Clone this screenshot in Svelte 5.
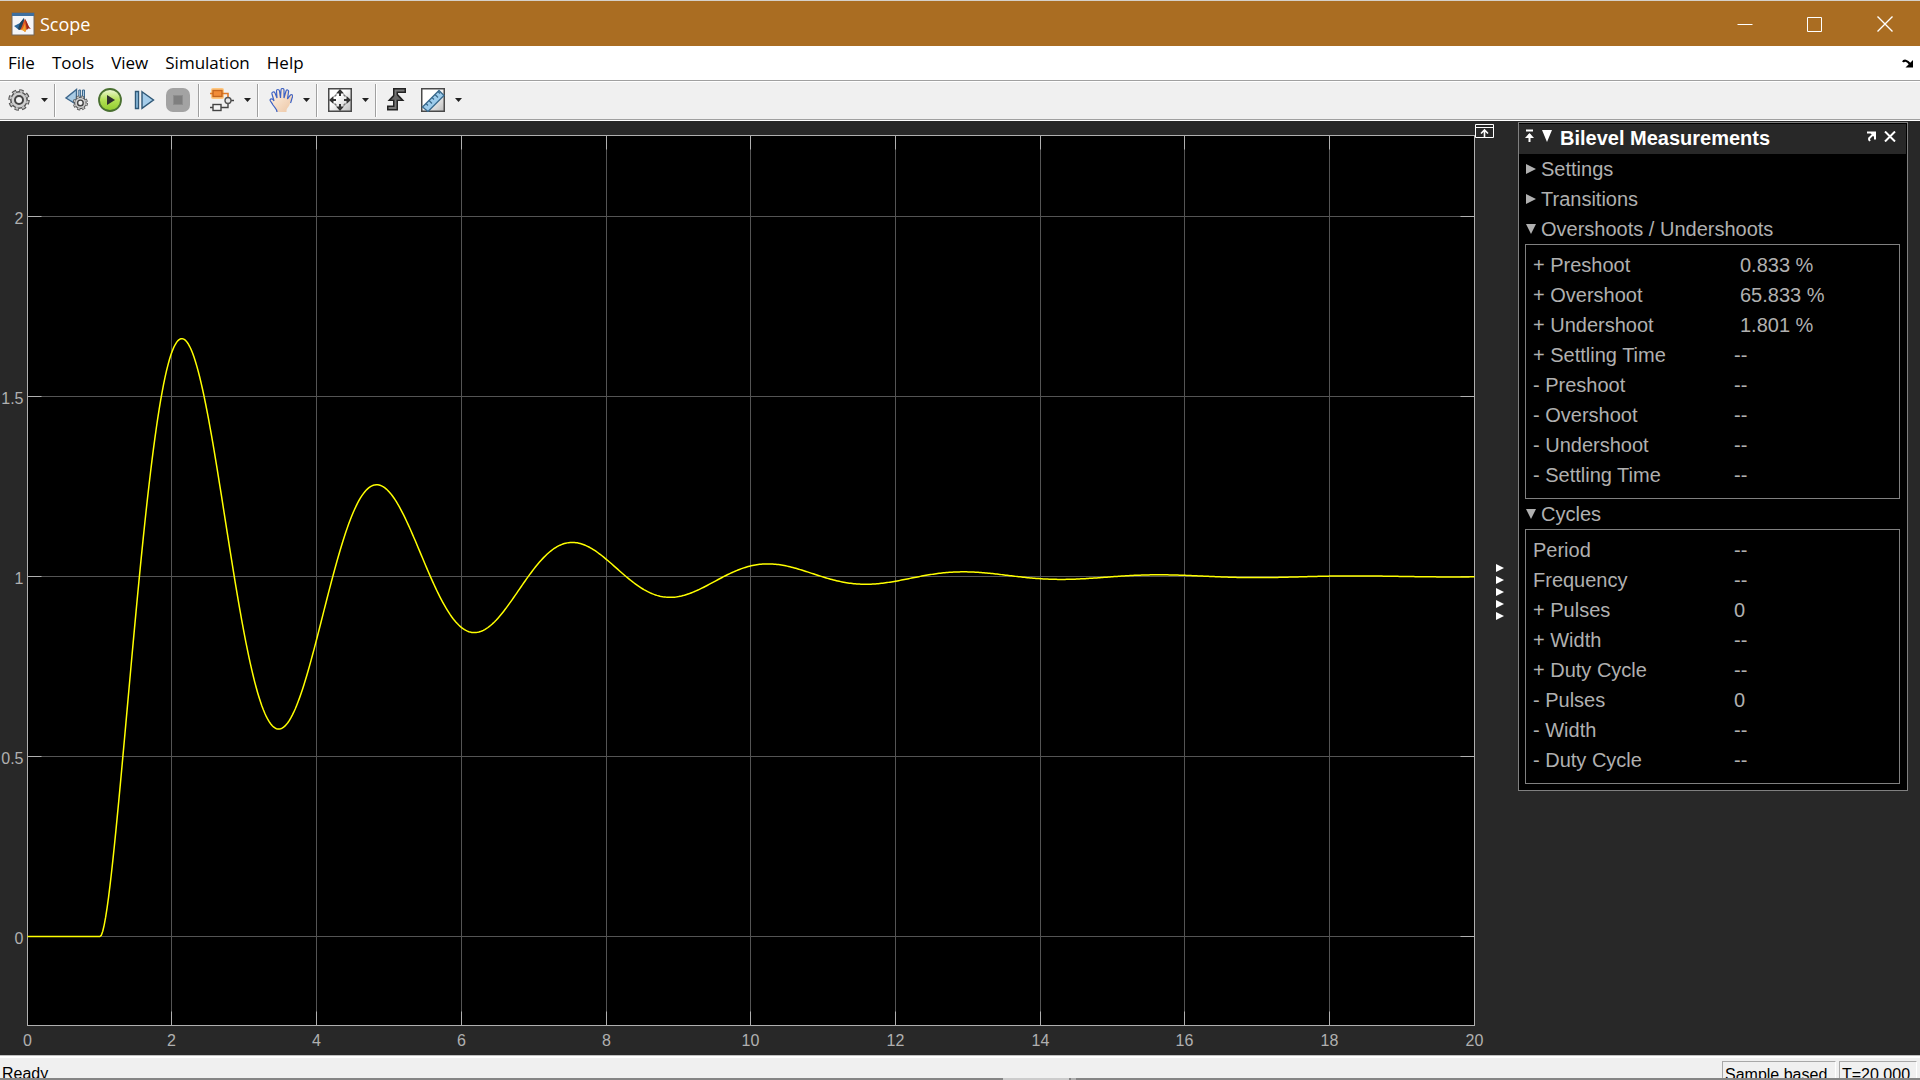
<script lang="ts">
  /**
   * Scope window: step response plot with the bilevel measurements panel
   */
  type Row = [label: string, value: string];

  const menus = ['File', 'Tools', 'View', 'Simulation', 'Help'];

  const overshoots: Row[] = [
    ['+ Preshoot', '0.833 %'],
    ['+ Overshoot', '65.833 %'],
    ['+ Undershoot', '1.801 %'],
    ['+ Settling Time', '--'],
    ['- Preshoot', '--'],
    ['- Overshoot', '--'],
    ['- Undershoot', '--'],
    ['- Settling Time', '--'],
  ];

  const cycles: Row[] = [
    ['Period', '--'],
    ['Frequency', '--'],
    ['+ Pulses', '0'],
    ['+ Width', '--'],
    ['+ Duty Cycle', '--'],
    ['- Pulses', '0'],
    ['- Width', '--'],
    ['- Duty Cycle', '--'],
  ];

  let sections = $state([
    { title: 'Settings', open: false, rows: [] as Row[] },
    { title: 'Transitions', open: false, rows: [] as Row[] },
    { title: 'Overshoots / Undershoots', open: true, rows: overshoots },
    { title: 'Cycles', open: true, rows: cycles },
  ]);

  // plot geometry
  const pad = { left: 27, top: 14, bottom: 30 };
  const tick = 14;
  const tMax = 20;
  const yMin = -0.247;
  const yMax = 2.225;
  const xTicks = [0, 2, 4, 6, 8, 10, 12, 14, 16, 18, 20];
  const yTicks = [0, 0.5, 1, 1.5, 2];

  let width = $state(1475);
  let height = $state(934);

  const left = pad.left + 0.5;
  const top = pad.top + 0.5;
  let right = $derived(width - 0.5);
  let bottom = $derived(height - pad.bottom + 0.5);

  const sx = (t: number) => left + ((right - left) * t) / tMax;
  const sy = (y: number) => bottom - ((bottom - top) * (y - yMin)) / (yMax - yMin);
  const snap = (v: number) => Math.floor(v) + 0.5;

  // step at t = 1, underdamped pair plus two real poles
  function response(t: number) {
    const u = t - 1;
    if (u <= 0) return 0;
    return (
      1 +
      1.053 * Math.exp(-0.3668 * u) * Math.cos(2.324 * u - 2.765) -
      0.145 * Math.exp(-1.45 * u) +
      0.124 * Math.exp(-11.9 * u)
    );
  }

  let trace = $derived(
    Array.from({ length: 1001 }, (_, i) => {
      const t = (i * tMax) / 1000;
      return `${sx(t).toFixed(2)},${sy(response(t)).toFixed(2)}`;
    }).join(' ')
  );
</script>

{#snippet caret(label: string)}
  <button class="caret" aria-label={label}>
    <svg width="7" height="4" viewBox="0 0 7 4"><path d="M0 0h7L3.5 4z" fill="#222" /></svg>
  </button>
{/snippet}

{#snippet gear()}
  <circle cx="12" cy="12" r="9.3" fill="none" stroke="#555" stroke-width="3" stroke-dasharray="4.3 3" />
  <circle cx="12" cy="12" r="8.2" fill="#cfcfcf" stroke="#555" stroke-width="1.5" />
  <circle cx="12" cy="12" r="8.6" fill="none" stroke="#c4c4c4" stroke-width="2.2" stroke-dasharray="2.6 4.15" stroke-dashoffset="-.8" />
  <circle cx="12" cy="12" r="4" fill="#f2f2f2" stroke="#444" stroke-width="2" />
{/snippet}

<div class="window">
  <header class="titlebar">
    <svg class="logo" width="24" height="24" viewBox="0 0 24 24">
      <rect x="1" y="1" width="22" height="22" fill="#f4f5f8" stroke="#72665b" />
      <path d="M1 1h22v3H1z" fill="#3e6f9f" />
      <path d="M3 14l6-3 4-5 1 4-3 7-3 1z" fill="#2d689b" />
      <path d="M9 11l4-5-1 8-3 4-2-1z" fill="#234158" />
      <path d="M9 18c2-2 3-8 5-11 2 2 3 8 6 10-3-2-4 0-6 3-1-1-2-3-5-2z" fill="#df5722" />
      <path d="M14 7c2 2 3 8 6 10-2-1-3-1-4 1z" fill="#9d281b" />
      <path d="M10 18c2-1 3-4 4-7l1 8-1 1c-1-1-2-2-4-2z" fill="#f0a12a" />
    </svg>
    <h1>Scope</h1>
    <div class="win-buttons">
      <button aria-label="Minimize"><svg width="16" height="16" viewBox="0 0 16 16"><path d="M.5 8.5h15" /></svg></button>
      <button aria-label="Maximize"><svg width="16" height="16" viewBox="0 0 16 16"><path d="M.5 1.5h14v14H.5z" /></svg></button>
      <button aria-label="Close"><svg width="16" height="16" viewBox="0 0 16 16"><path d="M.5.5l15 15M15.5.5l-15 15" stroke-width="1.4" /></svg></button>
    </div>
  </header>

  <nav class="menubar">
    {#each menus as item}
      <button>{item}</button>
    {/each}
    <button class="dock" aria-label="Dock window">
      <svg width="12" height="9" viewBox="0 0 12 9">
        <path d="M1 3C2 1 5 1 8 5" fill="none" stroke="#000" stroke-width="2.2" />
        <path d="M11 1v7.5H3.5z" fill="#000" />
      </svg>
    </button>
  </nav>

  <div class="toolbar" role="toolbar" aria-label="Scope tools">
    <div class="group first">
      <div class="split">
        <button class="tool" aria-label="Configuration properties">
          <svg width="24" height="24" viewBox="0 0 24 24">{@render gear()}</svg>
        </button>
        {@render caret('More configuration')}
      </div>
    </div>
    <div class="group run">
      <button class="tool" aria-label="Step back options">
        <svg width="24" height="24" viewBox="0 0 24 24">
          <path d="M12.5 1.5v15L2 10z" fill="#a9cbe4" stroke="#3d678c" stroke-width="1.4" />
          <path d="M14.8 2h1.8v11h-1.8zM18.5 2h2v11h-2z" fill="#a9cbe4" stroke="#3d678c" />
          <g transform="translate(8 6.5) scale(.7)">{@render gear()}</g>
        </svg>
      </button>
      <button class="tool" aria-label="Run">
        <svg width="24" height="24" viewBox="0 0 24 24">
          <defs>
            <linearGradient id="run" x1="0" y1="0" x2="0" y2="1">
              <stop offset="0" stop-color="#f2f9dc" />
              <stop offset=".5" stop-color="#b3e055" />
              <stop offset="1" stop-color="#8fcb2b" />
            </linearGradient>
          </defs>
          <circle cx="12" cy="12" r="11" fill="url(#run)" stroke="#4a7031" stroke-width="1.8" />
          <path d="M9 7l8 5-8 5z" fill="#2e2e2e" />
        </svg>
      </button>
      <button class="tool" aria-label="Step forward">
        <svg width="24" height="24" viewBox="0 0 24 24">
          <path d="M3.5 3.5h3v17h-3z" fill="#8fbfe0" stroke="#2f5877" stroke-width="1.4" />
          <path d="M10 3.7L21.5 12 10 20.3z" fill="#a5cdea" stroke="#2f5877" stroke-width="1.4" />
        </svg>
      </button>
      <button class="tool" aria-label="Stop" disabled>
        <svg width="24" height="24" viewBox="0 0 24 24">
          <rect width="24" height="24" rx="7" fill="#a3a3a3" />
          <rect x="7.5" y="7.5" width="9" height="9" fill="#7f7f7f" stroke="#8e8e8e" />
        </svg>
      </button>
    </div>
    <div class="group">
      <div class="split">
        <button class="tool" aria-label="Highlight block">
          <svg width="24" height="24" viewBox="0 0 24 24" fill="none">
            <rect x="1" y="0" width="13" height="11" rx="2" fill="#ffc67e" />
            <path d="M0 5.5h3M12 5.5h6v4" stroke="#e07a28" stroke-width="1.6" />
            <rect x="3" y="2.5" width="9" height="6" fill="#f28c38" stroke="#c4651e" stroke-width="1.4" />
            <path d="M0 19.5h3M11 19.5h7V15M21 12.500h3" stroke="#444" stroke-width="1.4" />
            <rect x="3" y="16.5" width="8" height="6" fill="#f4f4f4" stroke="#444" stroke-width="1.4" />
            <circle cx="18" cy="12.5" r="3" fill="#e8e8e8" stroke="#555" stroke-width="1.4" />
          </svg>
        </button>
        {@render caret('More highlight options')}
      </div>
    </div>
    <div class="group">
      <div class="split">
        <button class="tool" aria-label="Pan">
          <svg width="24" height="24" viewBox="0 0 24 24">
            <defs>
              <linearGradient id="skin" x1="0" y1="0" x2="1" y2="1">
                <stop offset="0" stop-color="#fff6ec" />
                <stop offset="1" stop-color="#edc5a2" />
              </linearGradient>
            </defs>
            <path
              d="M8 24c0-3-2-4-4-7-1-2-3-4-3-5 1-2 3-1 4 1L3 6c-.5-2 2-3 3-1l2 5-.5-7c0-2 2.5-2 3 0l1 7 .5-8c0-2 3-2 3 0v8l2-7c.5-2 3-1 2.5 1L18.500 11l3-4c1-1 3 0 2 2-2 3-2 8-5 11-1 1-1 2-1 4z"
              fill="url(#skin)"
            />
            <path
              d="M8 24c0-3-2-4-4-7-1-2-3-4-3-5 1-2 3-1 4 1L3 6c-.5-2 2-3 3-1l2 5-.5-7c0-2 2.5-2 3 0l1 7 .5-8c0-2 3-2 3 0v8l2-7c.5-2 3-1 2.5 1L18.500 11l3-4c1-1 3 0 2 2-1 2-1 4-2 6"
              fill="none"
              stroke="#3f63c4"
              stroke-width="1.2"
            />
          </svg>
        </button>
        {@render caret('More zoom tools')}
      </div>
    </div>
    <div class="group">
      <div class="split">
        <button class="tool" aria-label="Scale axes">
          <svg width="24" height="24" viewBox="0 0 24 24">
            <defs>
              <linearGradient id="sheet" x1="0" y1="0" x2="1" y2="1">
                <stop offset=".4" stop-color="#fff" />
                <stop offset="1" stop-color="#bbb" />
              </linearGradient>
            </defs>
            <rect x=".75" y=".75" width="22.5" height="22.5" fill="url(#sheet)" stroke="#4a4a4a" stroke-width="1.5" />
            <path d="M12 1l4 4.5H8zM12 23l4-4.500H8zM1 12l4.500-4v8zM23 12l-4.500-4v8z" fill="#333" />
            <path d="M12 5v3M12 16v3M5 12h3M16 12h3" stroke="#333" stroke-width="2" />
            <path d="M6.5 8.5l2-2M15.500 6.500l2 2M6.500 15.500l2 2M15.500 17.500l2-2" stroke="#777" stroke-width="1.4" />
          </svg>
        </button>
        {@render caret('More scaling options')}
      </div>
    </div>
    <div class="group last">
      <button class="tool" aria-label="Triggers">
        <svg width="24" height="24" viewBox="0 0 24 24">
          <path d="M0 20h8.500V2.500H19" fill="none" stroke="#222" stroke-width="5" />
          <path d="M9 4l8.500 9H.5z" fill="#222" />
          <path d="M1.500 20h7V2.500h9" fill="none" stroke="#777" stroke-width="2" />
          <path d="M9 6.500l5 5.300H4z" fill="#666" />
        </svg>
      </button>
      <div class="split">
        <button class="tool" aria-label="Measurements">
          <svg width="24" height="24" viewBox="0 0 24 24">
            <rect x=".75" y=".75" width="22.5" height="22.5" fill="url(#sheet)" stroke="#4a4a4a" stroke-width="1.5" />
            <path d="M1.500 19L18 2.500l5 5L7 23.500z" fill="#9dccec" stroke="#39698c" stroke-width="1.3" />
            <path d="M5 15.500l2 2M8 12.500l3 3M11 9.500l2 2M14 6.500l3 3M17 3.500l2 2" stroke="#39698c" stroke-width="1.2" />
          </svg>
        </button>
        {@render caret('More measurements')}
      </div>
    </div>
  </div>

  <main>
    <div class="plot" bind:clientWidth={width} bind:clientHeight={height}>
      <svg class="axes" {width} {height} role="img" aria-label="Step response">
        <rect x={left} y={top} width={right - left} height={bottom - top} fill="#000" />
        {#each xTicks as t}
          {@const x = snap(sx(t) - 0.3)}
          <path class="grid" d="M{x} {top}V{bottom}" />
          <path class="tick" d="M{x} {top}v{tick}M{x} {bottom}v{-tick}" />
          <text {x} y={bottom + 20} text-anchor="middle">{t}</text>
        {/each}
        {#each yTicks as v}
          {@const y = snap(sy(v))}
          <path class="grid" d="M{left} {y}H{right}" />
          <path class="tick" d="M{left} {y}h{tick}M{right} {y}h{-tick}" />
          <text x={left - 4} y={y + 7} text-anchor="end">{v}</text>
        {/each}
        <rect class="frame" x={left} y={top} width={right - left} height={bottom - top} />
        <polyline class="trace" points={trace} />
      </svg>
    </div>

    <div class="gutter">
      <button class="maximize" aria-label="Maximize axes">
        <svg width="19" height="14" viewBox="0 0 19 14">
          <path d="M.5.5h18v13H.5zM1 3.500h17" fill="none" stroke="#fff" />
          <path d="M9.500 13V6M6 9.500L9.500 6 13 9.500" fill="none" stroke="#fff" stroke-width="1.6" />
        </svg>
      </button>
      <button class="collapse" aria-label="Collapse panel">
        {#each [0, 1, 2, 3, 4] as _}
          <svg width="8" height="8" viewBox="0 0 8 8"><path d="M0 0l8 4-8 4z" fill="#fff" /></svg>
        {/each}
      </button>
    </div>

    <aside class="panel">
      <div class="panel-head">
        <button aria-label="Move panel up">
          <svg width="9" height="14" viewBox="0 0 9 14">
            <path d="M1 1.500h7M4.500 13V5" fill="none" stroke="#fff" stroke-width="2" />
            <path d="M4.500 4L9 9H0z" fill="#fff" />
          </svg>
        </button>
        <button aria-label="Collapse measurements">
          <svg width="10" height="12" viewBox="0 0 10 12"><path d="M0 0h10L5 12z" fill="#fff" /></svg>
        </button>
        <h2>Bilevel Measurements</h2>
        <button aria-label="Undock panel">
          <svg width="10" height="11" viewBox="0 0 10 11">
            <path d="M1 1.500h8v7M8.500 2L4 6.500q-2 1 0 3.500" fill="none" stroke="#fff" stroke-width="2" />
            <path d="M9 1v6L3.500 1z" fill="#fff" />
          </svg>
        </button>
        <button aria-label="Close panel">
          <svg width="12" height="11" viewBox="0 0 12 11"><path d="M1 .5l10 10M11 .5L1 10.500" stroke="#fff" stroke-width="2" /></svg>
        </button>
      </div>

      {#each sections as section}
        <button class="section" aria-expanded={section.open} onclick={() => (section.open = !section.open)}>
          <svg width="10" height="10" viewBox="0 0 10 10">
            <path d={section.open ? 'M0 0h10L5 10z' : 'M0 0l10 5-10 5z'} fill="#b0b0b0" />
          </svg>
          {section.title}
        </button>
        {#if section.open && section.rows.length}
          <div class="box">
            <table>
              <tbody>
                {#each section.rows as [label, value]}
                  <tr>
                    <th scope="row">{label}</th>
                    <td class:percent={value.endsWith('%')}>{value}</td>
                  </tr>
                {/each}
              </tbody>
            </table>
          </div>
        {/if}
      {/each}
    </aside>
  </main>

  <footer class="status">
    <span class="ready">Ready</span>
    <span class="cell mode">Sample based</span>
    <span class="cell time">T=20.000</span>
  </footer>
  <div class="edge"><span></span><span></span></div>
</div>

<style>
  :global(body) {
    margin: 0;
    overflow: hidden;
  }

  .window {
    display: flex;
    flex-direction: column;
    height: 100vh;
    background: #282828;
    font-family: 'Liberation Sans', Arial, sans-serif;
  }

  button {
    display: flex;
    align-items: center;
    justify-content: center;
    margin: 0;
    padding: 0;
    border: 0;
    background: none;
    color: inherit;
    font: inherit;
  }

  svg {
    display: block;
    flex: none;
  }

  /* Title bar */
  .titlebar {
    display: flex;
    align-items: center;
    flex: none;
    height: 45px;
    padding-left: 11px;
    border-top: 1px solid #d5d0ca;
    background: #aa6d22;
    color: #fff;
  }
  h1 {
    flex: 1;
    margin: 0 0 0 5px;
    font: 400 18px/24px 'Open Sans', 'Noto Sans', sans-serif;
  }
  .win-buttons {
    display: flex;
    align-self: stretch;
  }
  .win-buttons button {
    width: 70px;
  }
  .win-buttons path {
    fill: none;
    stroke: #fff;
  }

  /* Menu bar */
  .menubar {
    display: flex;
    align-items: center;
    flex: none;
    gap: 17px;
    height: 34px;
    padding: 0 6px 0 8px;
    background: #fff;
    color: #000;
    font: 400 17px/24px 'Open Sans', 'Noto Sans', sans-serif;
  }
  .dock {
    margin-left: auto;
  }

  /* Toolbar */
  .toolbar {
    display: flex;
    flex: none;
    height: 38px;
    border-top: 1px solid #a0a0a0;
    border-bottom: 1px solid #a0a0a0;
    box-shadow: inset 0 1px #fff, 0 1px #fff;
    background: #f0f0f0;
    z-index: 1;
  }
  .group {
    display: flex;
    align-items: center;
    gap: 10px;
    margin: 3px 0 2px;
    padding: 0 0 2px 11px;
    border-right: 1px solid #a0a0a0;
    box-shadow: 1px 0 #fff;
  }
  .first {
    padding-left: 7px;
  }
  .run {
    padding: 0 8px 2px 9px;
  }
  .last {
    border: 0;
    box-shadow: none;
  }
  .split {
    display: flex;
  }
  .tool {
    width: 24px;
    height: 24px;
  }
  .caret {
    width: 23px;
    padding-left: 3px;
  }

  /* Plot */
  main {
    display: flex;
    flex: 1;
    min-height: 0;
    padding-top: 1px;
  }
  .plot {
    flex: 1;
    min-width: 0;
  }
  .axes {
    position: relative;
    overflow: visible;
  }
  .axes text {
    fill: #b0b0b0;
    font-size: 16px;
  }
  .grid {
    stroke: #545454;
  }
  .tick {
    stroke: #b0b0b0;
  }
  .frame {
    fill: none;
    stroke: #b0b0b0;
  }
  .trace {
    fill: none;
    stroke: #ff0;
    stroke-width: 1.5px;
  }

  .gutter {
    display: flex;
    flex-direction: column;
    align-items: flex-start;
    width: 43px;
    padding-top: 3px;
  }
  .collapse {
    flex-direction: column;
    gap: 4px;
    margin: auto 0 auto 21px;
    padding-bottom: 10px;
  }

  /* Measurements panel */
  .panel {
    align-self: flex-start;
    box-sizing: border-box;
    width: 390px;
    margin: 1px 12px 0 0;
    padding-bottom: 6px;
    border: 1px solid #808080;
    background: #000;
    color: #b0b0b0;
    font-size: 20px;
    line-height: 30px;
  }
  .panel-head {
    display: flex;
    align-items: center;
    gap: 8px;
    box-sizing: border-box;
    height: 30px;
    margin: 1px 1px 0 0;
    padding: 0 10px 6px 6px;
    background: #282828;
    color: #fff;
  }
  h2 {
    flex: 1;
    margin: 0;
    padding-top: 4px;
    font-size: 20px;
    line-height: 24px;
  }
  .section {
    gap: 5px;
    padding-left: 7px;
  }
  .box {
    margin: 0 7px 0 6px;
    padding: 5px 7px 8px;
    border: 1px solid #808080;
  }
  table {
    width: 100%;
    border-collapse: collapse;
    table-layout: fixed;
  }
  th {
    width: 201px;
    padding: 0;
    font-weight: 400;
    text-align: left;
  }
  td {
    padding: 0;
  }
  .percent {
    padding-left: 6px;
  }

  /* Status bar */
  .status {
    display: flex;
    flex: none;
    gap: 3px;
    box-sizing: border-box;
    height: 23px;
    padding: 4px 3px 0 2px;
    overflow: hidden;
    border-top: 1px solid #c0c0c0;
    box-shadow: inset 0 2px #fff;
    background: #f0f0f0;
    color: #000;
    font-size: 16px;
    line-height: 26px;
  }
  .ready {
    flex: 1;
    padding-top: 1px;
  }
  .cell {
    box-sizing: border-box;
    height: 30px;
    margin-top: 1px;
    padding-left: 2px;
    border: 1px solid #a8a8a8;
    border-right-color: #fff;
  }
  .mode {
    width: 114px;
  }
  .time {
    width: 78px;
  }
  .edge {
    display: flex;
    justify-content: center;
    flex: none;
    gap: 2px;
    height: 2px;
    padding-left: 159px;
    background: #858585;
  }
  .edge span {
    width: 66px;
    background: #ccc;
  }
  .edge span + span {
    width: 5px;
    background: #b0b0b0;
  }
</style>
